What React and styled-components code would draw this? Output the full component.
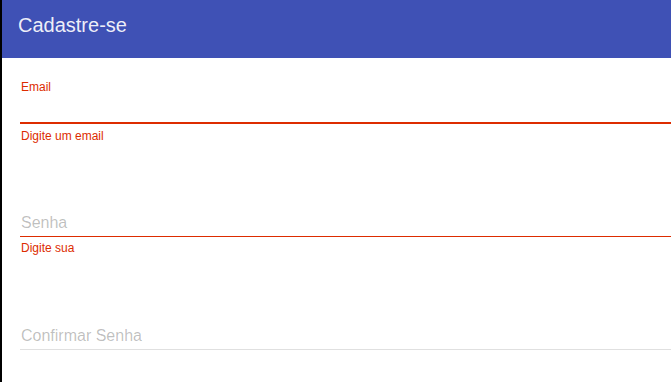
import React from "react";
import styled, { createGlobalStyle } from "styled-components";

const Global = createGlobalStyle`
  html, body { margin: 0; padding: 0; background: #fff; }
  body { font-family: "Liberation Sans", Arial, sans-serif; }
  * { box-sizing: border-box; }
`;

const Page = styled.div`
  min-height: 100vh;
  border-left: 2px solid #000;
  background: #fff;
`;

const Header = styled.header`
  height: 58px;
  background: #3f51b5;
  padding: 13px 16px 0;
`;

const Title = styled.h1`
  margin: 0;
  font-size: 20px;
  line-height: 24px;
  font-weight: 400;
  color: rgba(255, 255, 255, 0.92);
`;

const Form = styled.form`
  display: flex;
  flex-direction: column;
  padding-left: 18px;
`;

const Field = styled.div`
  display: flex;
  flex-direction: column;
  margin-top: ${(p) => p.$offset}px;
`;

const FloatLabel = styled.label`
  font-size: 12px;
  line-height: 12px;
  padding-left: 1px;
  color: ${(p) => (p.$error ? "#dd2c00" : "rgba(0,0,0,0.3)")};
`;

const Input = styled.input`
  display: block;
  width: 100%;
  height: ${(p) => p.$h}px;
  margin: 0;
  padding: 0 0 0 1px;
  border: none;
  outline: none;
  background: transparent;
  font-family: "Liberation Sans", Arial, sans-serif;
  font-size: 16px;
  line-height: 16px;
  color: rgba(0, 0, 0, 0.87);
  &::placeholder {
    color: rgba(0, 0, 0, 0.26);
    opacity: 1;
  }
`;

const Underline = styled.div`
  margin-top: ${(p) => p.$gap}px;
  height: ${(p) => p.$thick}px;
  background: ${(p) => (p.$error ? "#dd2c00" : "#e0e0e0")};
`;

const Helper = styled.div`
  margin-top: ${(p) => p.$gap}px;
  font-size: 12px;
  line-height: 12px;
  padding-left: 1px;
  color: #dd2c00;
`;

export default function App() {
  return (
    <>
      <Global />
      <Page>
        <Header>
          <Title>Cadastre-se</Title>
        </Header>
        <Form onSubmit={(e) => e.preventDefault()}>
          <Field $offset={23}>
            <FloatLabel $error htmlFor="email">Email</FloatLabel>
            <Input id="email" type="email" $h={29} />
            <Underline $gap={0} $thick={2} $error />
            <Helper $gap={6}>Digite um email</Helper>
          </Field>
          <Field $offset={73}>
            <Input type="password" placeholder="Senha" $h={16} />
            <Underline $gap={5} $thick={1} $error />
            <Helper $gap={5}>Digite sua</Helper>
          </Field>
          <Field $offset={74}>
            <Input type="password" placeholder="Confirmar Senha" $h={16} />
            <Underline $gap={5} $thick={1} />
          </Field>
        </Form>
      </Page>
    </>
  );
}
